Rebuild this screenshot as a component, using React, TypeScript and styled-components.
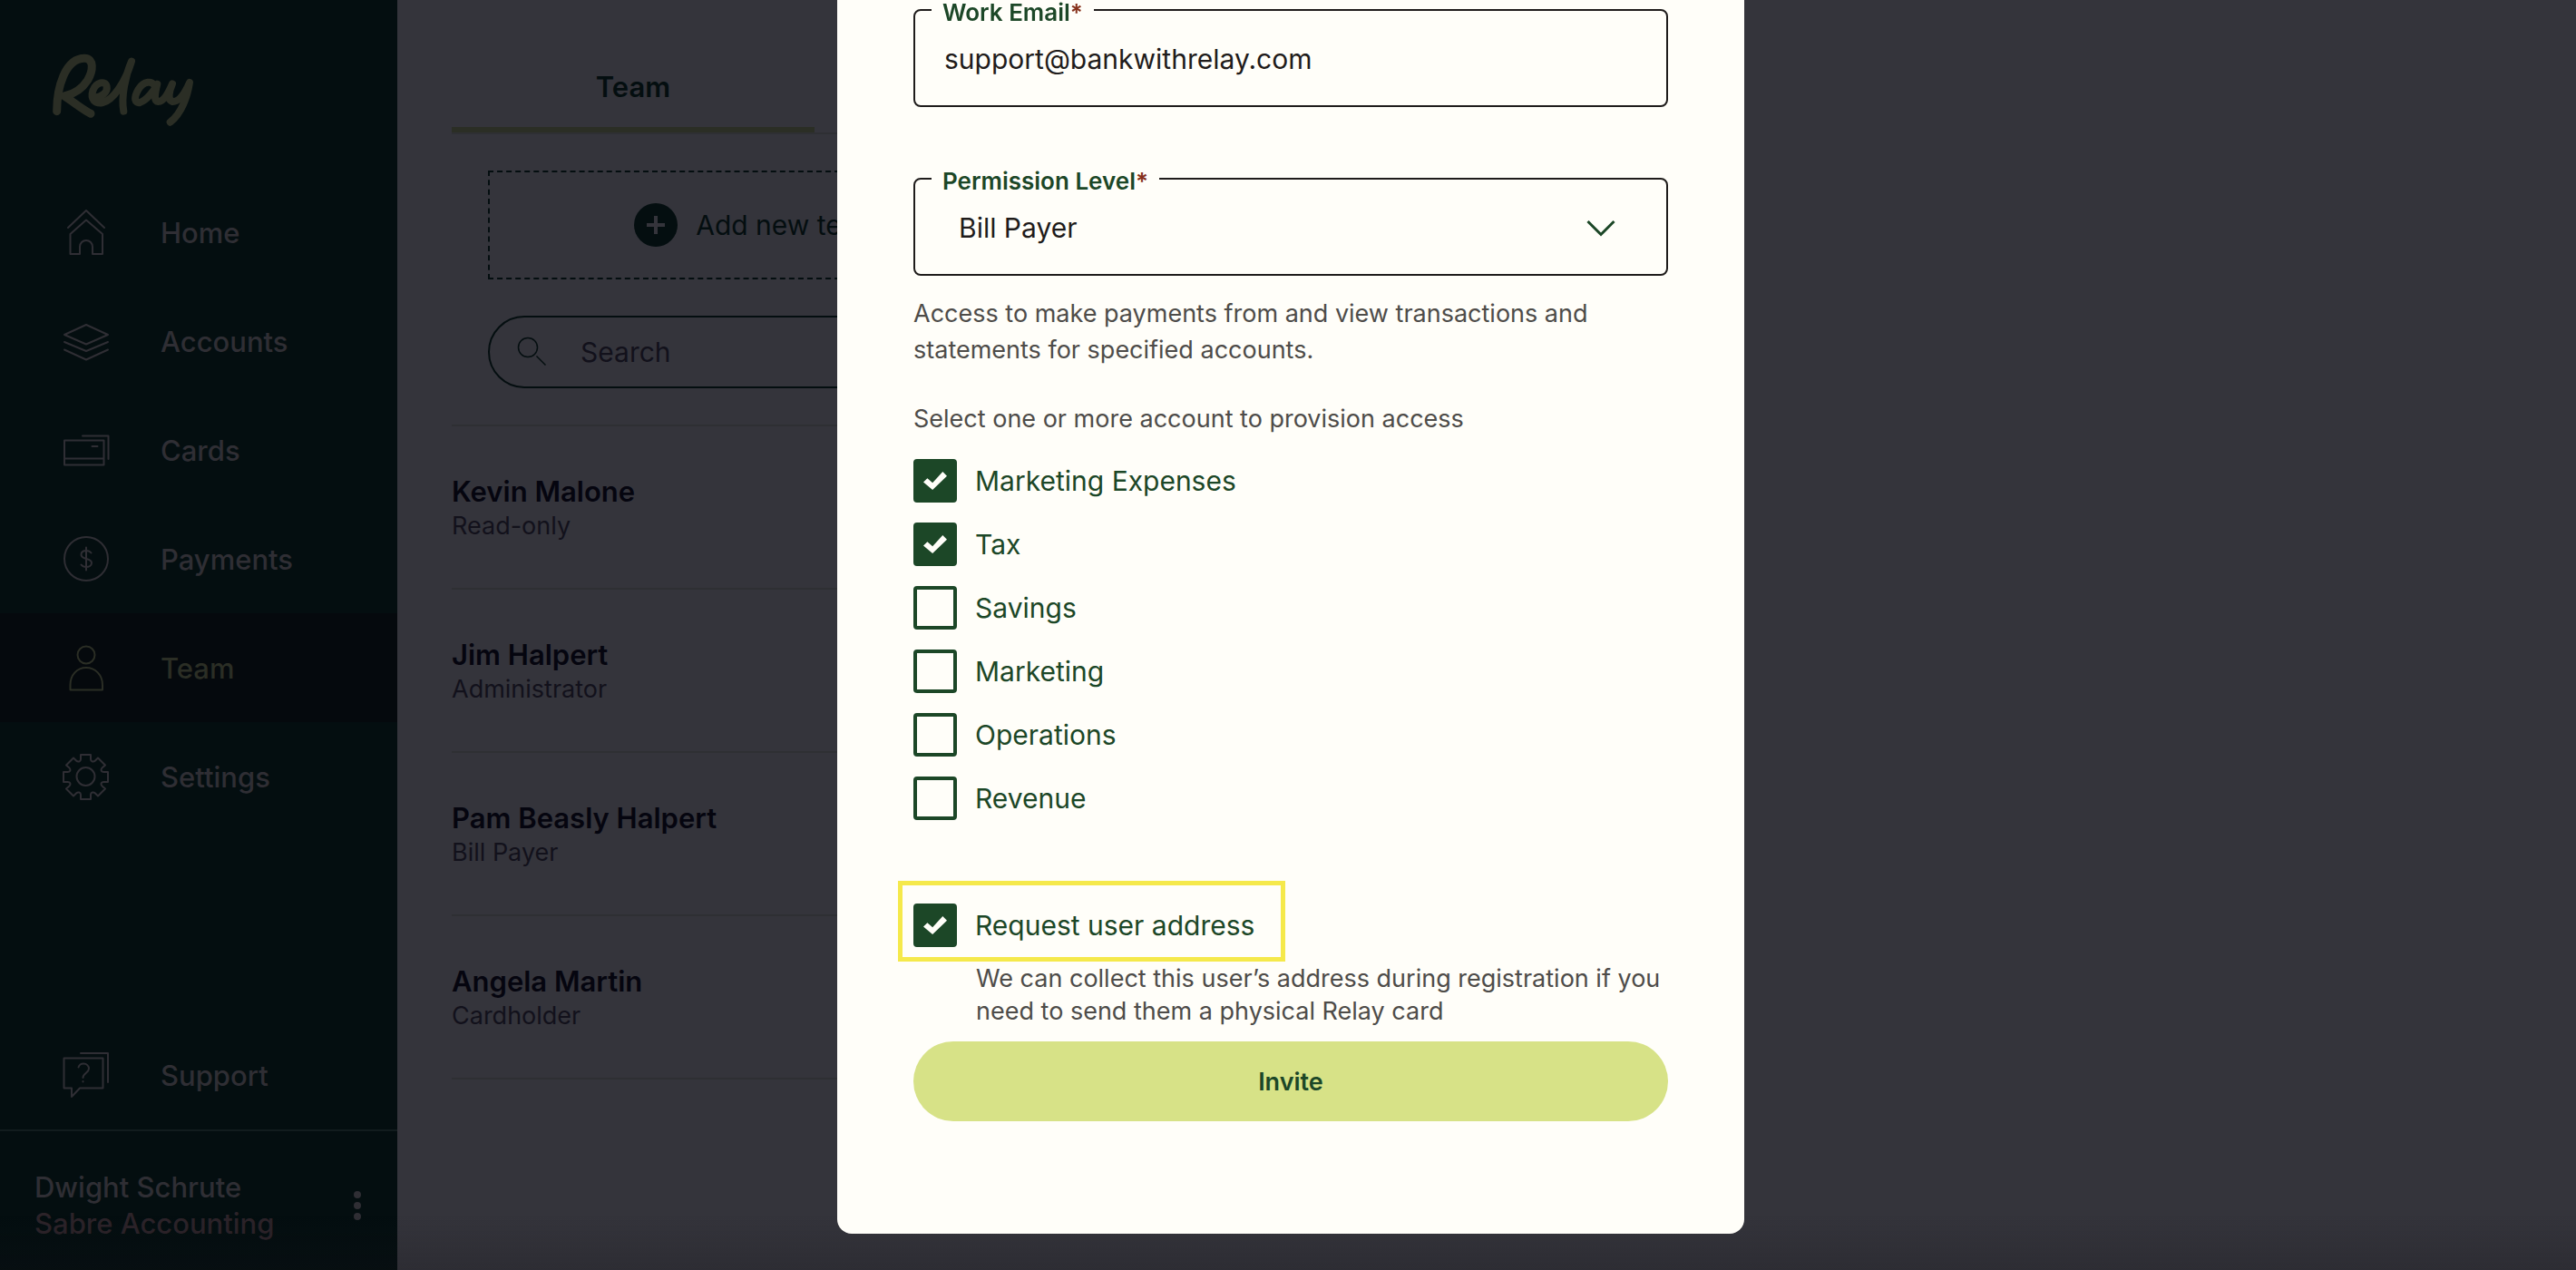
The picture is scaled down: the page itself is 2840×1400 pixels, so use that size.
import React, { useState } from "react";
import styled, { createGlobalStyle, css } from "styled-components";

const color = {
  page: "#34343b",
  sidebar: "#040e10",
  sidebarActive: "#05090d",
  sidebarLine: "#121c1e",
  sidebarText: "#2f2e34",
  sidebarMuted: "#2c2329",
  olive: "#2b2e25",
  ink: "#040e10",
  rowLine: "#2e2f33",
  name: "#05050f",
  muted: "#12111b",
  modal: "#fffef9",
  green: "#1c4727",
  lime: "#d7e287",
  text: "#1f1c1b",
  body: "#4e4c49",
  required: "#86301a",
  highlight: "#f5e94b",
};

const GlobalStyle = createGlobalStyle`
  *, *::before, *::after { box-sizing: border-box; }
  body {
    margin: 0;
    background: ${color.page};
    font-family: Inter, "Liberation Sans", sans-serif;
    font-size: 30px;
    line-height: 40px;
    overflow: hidden;
  }
  button, input, select { font: inherit; color: inherit; }
`;

const Page = styled.div`
  display: flex;
  height: 100vh;
`;

const Sidebar = styled.aside`
  display: flex;
  flex-direction: column;
  flex: 0 0 438px;
  background: ${color.sidebar};
  color: ${color.sidebarText};
  font-size: 31px;
  font-weight: 500;
`;

const LogoLink = styled.a`
  display: block;
  height: 196px;
  padding: 56px 54px 0;
`;

const NavList = styled.nav<{ $bottom?: boolean }>`
  display: flex;
  flex-direction: column;
  ${(p) => p.$bottom && css`margin-top: auto;`}
`;

const NavItem = styled.a<{ $active?: boolean }>`
  display: flex;
  align-items: center;
  gap: 56px;
  height: 120px;
  padding: 2px 0 0 69px;
  color: ${(p) => (p.$active ? color.olive : "inherit")};
  background: ${(p) => (p.$active ? color.sidebarActive : "transparent")};
  text-decoration: none;
`;

const LineIcon = styled.svg`
  flex: none;
  width: 52px;
  height: 52px;
  fill: none;
  stroke: currentColor;
  stroke-width: 2;
  stroke-linejoin: round;
  stroke-linecap: round;
`;

const Account = styled.div`
  display: flex;
  align-items: center;
  justify-content: space-between;
  height: 155px;
  padding: 10px 28px 0 38px;
  border-top: 2px solid ${color.sidebarLine};
`;

const AccountName = styled.div``;
const Company = styled.div`
  color: ${color.sidebarMuted};
`;

const MenuButton = styled.button`
  display: grid;
  place-items: center;
  width: 32px;
  height: 48px;
  padding: 0;
  border: 0;
  background: none;
`;

const Main = styled.main`
  flex: 1;
  min-width: 0;
  padding: 0 60px;
`;

const Column = styled.div`
  max-width: 800px;
`;

const Tabs = styled.div`
  display: flex;
  height: 148px;
  padding-top: 52px;
  border-bottom: 2px solid ${color.rowLine};
`;

const Tab = styled.button`
  flex: 0 0 50%;
  padding: 0;
  border: 0;
  border-bottom: 6px solid ${color.olive};
  background: none;
  color: ${color.ink};
  font-size: 31px;
  font-weight: 600;
`;

const Tools = styled.div`
  display: flex;
  flex-direction: column;
  gap: 40px;
  padding: 40px;
`;

const AddButton = styled.button`
  display: flex;
  align-items: center;
  justify-content: center;
  gap: 20px;
  height: 120px;
  border: 2px dashed ${color.ink};
  background: none;
  color: ${color.ink};
`;

const SearchBox = styled.label`
  display: flex;
  align-items: center;
  gap: 36px;
  height: 80px;
  padding: 0 30px;
  border: 2px solid ${color.ink};
  border-radius: 40px;
  color: ${color.ink};
`;

const SearchInput = styled.input`
  flex: 1;
  min-width: 0;
  padding: 0;
  border: 0;
  outline: 0;
  background: none;
  color: ${color.muted};
  &::placeholder { color: ${color.muted}; opacity: 1; }
`;

const People = styled.ul`
  margin: 0;
  padding: 0;
  list-style: none;
  border-top: 2px solid ${color.rowLine};
`;

const Person = styled.li`
  height: 180px;
  padding-top: 52px;
  border-bottom: 2px solid ${color.rowLine};
`;

const PersonName = styled.div`
  color: ${color.name};
  font-size: 31px;
  font-weight: 600;
`;

const PersonRole = styled.div`
  color: ${color.muted};
  font-size: 27px;
  line-height: 36px;
`;

const Overlay = styled.div`
  position: fixed;
  inset: 0;
  display: flex;
  align-items: flex-start;
  justify-content: center;
  padding-left: 6px;
  background: linear-gradient(to top, rgba(20, 18, 24, 0.2), transparent 60px);
`;

const Dialog = styled.form`
  width: 1000px;
  padding: 0 84px 124px;
  border-radius: 0 0 16px 16px;
  background: ${color.modal};
  color: ${color.text};
`;

const Field = styled.fieldset`
  position: relative;
  min-width: 0;
  height: 118px;
  margin: 0;
  padding: 0;
  border: 2px solid ${color.text};
  border-radius: 8px;
  & + & { margin-top: 68px; }
`;

const Legend = styled.legend`
  margin-left: 18px;
  padding: 5px 12px 0;
  color: ${color.green};
  font-size: 26px;
  font-weight: 600;
  line-height: 17px;
`;

const Required = styled.span`
  color: ${color.required};
`;

const TextInput = styled.input`
  display: block;
  width: 100%;
  height: 94px;
  padding: 0 32px 8px;
  border: 0;
  outline: 0;
  background: none;
`;

const Select = styled.select`
  display: block;
  width: 100%;
  height: 94px;
  padding: 0 48px 8px;
  border: 0;
  outline: 0;
  appearance: none;
  background: none;
`;

const Chevron = styled.svg`
  position: absolute;
  top: 34px;
  right: 56px;
  pointer-events: none;
  fill: none;
  stroke: ${color.green};
  stroke-width: 3;
`;

const Description = styled.p`
  margin: 22px 0 0;
  color: ${color.body};
  font-size: 27px;
`;

const Accounts = styled.fieldset`
  min-width: 0;
  margin: 36px 0 0;
  padding: 0;
  border: 0;
`;

const AccountsTitle = styled.legend`
  margin-bottom: 24px;
  padding: 0;
  color: ${color.body};
  font-size: 27px;
`;

const Checks = styled.div`
  display: flex;
  flex-direction: column;
  gap: 22px;
`;

const CheckRow = styled.label`
  display: flex;
  align-items: center;
  gap: 20px;
  color: ${color.green};
`;

const tick =
  "polygon(0 58%, 17% 36%, 39% 61%, 82% 0, 100% 24%, 39% 100%)";

const CheckInput = styled.input`
  display: grid;
  place-items: center;
  flex: none;
  appearance: none;
  width: 48px;
  height: 48px;
  margin: 0;
  border: 4px solid ${color.green};
  border-radius: 4px;
  &:checked { background: ${color.green}; }
  &:checked::before {
    content: "";
    width: 26px;
    height: 20px;
    background: ${color.modal};
    clip-path: ${tick};
  }
`;

const RequestBlock = styled.div`
  position: relative;
  margin: 92px 0 15px;
`;

const Highlight = styled.div`
  position: absolute;
  top: -25px;
  left: -17px;
  width: 427px;
  height: 89px;
  border: 5px solid ${color.highlight};
  pointer-events: none;
`;

const Hint = styled.p`
  margin: 17px 0 0 69px;
  color: ${color.body};
  font-size: 27px;
  line-height: 36px;
`;

const InviteButton = styled.button`
  display: block;
  width: 100%;
  height: 88px;
  padding: 2px 0 0;
  border: 0;
  border-radius: 44px;
  background: ${color.lime};
  color: ${color.green};
  font-size: 27px;
  font-weight: 600;
`;

const Logo = () => (
  <svg
    width="164"
    height="86"
    viewBox="162 168 492 258"
    role="img"
    aria-label="Relay"
    fill="none"
    stroke={color.olive}
    strokeWidth="27"
    strokeLinecap="round"
    strokeLinejoin="round"
  >
    <path d="M188 368C188 290 215 193 280 193C312 193 308 235 290 265C270 296 240 312 213 318C240 335 270 360 300 376" />
    <path
      strokeWidth="24"
      d="M308 322C335 324 357 305 353 286C349 266 318 270 307 300C298 330 315 343 338 340C375 332 415 270 435 203C415 250 400 320 409 368"
    />
    <path
      strokeWidth="24"
      d="M512 285C505 265 475 268 458 295C440 325 447 343 463 339C485 332 510 300 520 278C512 310 508 335 523 336C545 336 560 300 570 277C560 300 553 330 570 336C595 338 615 300 627 273C620 320 600 375 563 404"
    />
  </svg>
);

const icons = {
  home: (
    <>
      <path d="M6 20L26 1L46 20" />
      <path d="M8.500 27L26 11.500L44 27V49H33V41A7 7 0 0 0 19 41V49H8.500Z" />
    </>
  ),
  accounts: (
    <path d="M26 7L50 18L26 28.500L2 18ZM2 26L26 36L50 26M2 34.500L26 45.500L50 34.500" />
  ),
  cards: (
    <path d="M2 14.500H45.500V41.500H2ZM2 34.500H45.500M32.500 21H38.500M22 9.500H50.500V35" />
  ),
  payments: (
    <>
      <circle cx="26" cy="25" r="24" />
      <path d="M31.500 18.500C30 16.500 28 16 26 16C23 16 20.500 17.500 20.500 20.500C20.500 26.500 32 23.500 32 29.500C32 32.500 29 34 26 34C24 34 22 33.500 20.500 31.500M26 12.500V37.500" />
    </>
  ),
  team: (
    <>
      <circle cx="26" cy="11" r="9.500" />
      <path d="M8.500 49.500V44C8.500 33 16 25 26 25S44 33 44 44V49.500Z" />
    </>
  ),
  settings: (
    <>
      <circle cx="25.500" cy="25" r="10" />
      <path d="M20 1H31V6C31 8.500 34 9.500 36 7.500L39 4.500L47 12.500L43.500 15.500C41.500 18 42.500 20 45.500 20H50V31H45.500C42.500 31 41.500 33 43.500 35.500L47 38.500L39 46.500L36 43.500C34 41.500 31 42.500 31 45V50H20V45C20 42.500 17 41.500 15 43.500L12 46.500L4 38.500L7.500 35.500C9.500 33 8.500 31 5.500 31H1V20H5.500C8.500 20 9.500 18 7.500 15.500L4 12.500L12 4.500L15 7.500C17 9.500 20 8.500 20 6Z" />
    </>
  ),
  support: (
    <>
      <path d="M1.500 6.500H44.500V39.500H19L10 49V39.500H1.500ZM20 1H50V33" />
      <path d="M17.500 16.500C18.500 13.500 20.500 12.500 23 12.500C26.500 12.500 29 15 29 18C29 22.500 22.500 23 22.500 28" />
      <path d="M22.500 32V32.500" />
    </>
  ),
};

const navItems: { id: keyof typeof icons; label: string }[] = [
  { id: "home", label: "Home" },
  { id: "accounts", label: "Accounts" },
  { id: "cards", label: "Cards" },
  { id: "payments", label: "Payments" },
  { id: "team", label: "Team" },
  { id: "settings", label: "Settings" },
];

const people = [
  { name: "Kevin Malone", role: "Read-only" },
  { name: "Jim Halpert", role: "Administrator" },
  { name: "Pam Beasly Halpert", role: "Bill Payer" },
  { name: "Angela Martin", role: "Cardholder" },
];

const accountNames = [
  "Marketing Expenses",
  "Tax",
  "Savings",
  "Marketing",
  "Operations",
  "Revenue",
];

const NavLink = ({
  id,
  label,
  active,
}: {
  id: keyof typeof icons;
  label: string;
  active?: boolean;
}) => (
  <NavItem href={`#${id}`} $active={active} aria-current={active ? "page" : undefined}>
    <LineIcon viewBox="0 0 52 52" aria-hidden="true">
      {icons[id]}
    </LineIcon>
    {label}
  </NavItem>
);

const CheckOption = ({
  label,
  initial = false,
}: {
  label: string;
  initial?: boolean;
}) => {
  const [checked, setChecked] = useState(initial);
  return (
    <CheckRow>
      <CheckInput
        type="checkbox"
        checked={checked}
        onChange={(e) => setChecked(e.target.checked)}
      />
      {label}
    </CheckRow>
  );
};

const InviteDialog = () => (
  <Overlay>
    <Dialog onSubmit={(e) => e.preventDefault()}>
      <Field>
        <Legend>
          <label htmlFor="email">
            Work Email<Required>*</Required>
          </label>
        </Legend>
        <TextInput id="email" type="email" defaultValue="support@bankwithrelay.com" />
      </Field>
      <Field>
        <Legend>
          <label htmlFor="permission">
            Permission Level<Required>*</Required>
          </label>
        </Legend>
        <Select id="permission" defaultValue="Bill Payer">
          <option>Bill Payer</option>
        </Select>
        <Chevron width="32" height="20" viewBox="0 0 32 20" aria-hidden="true">
          <path d="M1.500 2L16 16.500L30.500 2" />
        </Chevron>
      </Field>
      <Description>
        Access to make payments from and view transactions and statements for
        specified accounts.
      </Description>
      <Accounts>
        <AccountsTitle>Select one or more account to provision access</AccountsTitle>
        <Checks>
          {accountNames.map((name, i) => (
            <CheckOption key={name} label={name} initial={i < 2} />
          ))}
        </Checks>
      </Accounts>
      <RequestBlock>
        <CheckOption label="Request user address" initial />
        <Highlight />
        <Hint>
          We can collect this user’s address during registration if you need to
          send them a physical Relay card
        </Hint>
      </RequestBlock>
      <InviteButton type="submit">Invite</InviteButton>
    </Dialog>
  </Overlay>
);

export default function App() {
  return (
    <>
      <GlobalStyle />
      <Page>
        <Sidebar>
          <LogoLink href="#home">
            <Logo />
          </LogoLink>
          <NavList>
            {navItems.map((item) => (
              <NavLink key={item.id} {...item} active={item.id === "team"} />
            ))}
          </NavList>
          <NavList $bottom>
            <NavLink id="support" label="Support" />
          </NavList>
          <Account>
            <div>
              <AccountName>Dwight Schrute</AccountName>
              <Company>Sabre Accounting</Company>
            </div>
            <MenuButton type="button" aria-label="Account menu">
              <svg width="8" height="32" viewBox="0 0 8 32" fill="currentColor">
                <circle cx="4" cy="4" r="4" />
                <circle cx="4" cy="16" r="4" />
                <circle cx="4" cy="28" r="4" />
              </svg>
            </MenuButton>
          </Account>
        </Sidebar>
        <Main>
          <Column>
            <Tabs>
              <Tab type="button">Team</Tab>
            </Tabs>
            <Tools>
              <AddButton type="button">
                <svg width="48" height="48" viewBox="0 0 48 48" aria-hidden="true">
                  <circle cx="24" cy="24" r="24" fill="currentColor" />
                  <path d="M24 14V34M14 24H34" stroke={color.page} strokeWidth="4" />
                </svg>
                Add new team member
              </AddButton>
              <SearchBox>
                <svg
                  width="34"
                  height="34"
                  viewBox="0 0 34 34"
                  fill="none"
                  stroke="currentColor"
                  strokeWidth="1.500"
                  aria-hidden="true"
                >
                  <circle cx="12" cy="12" r="10.500" />
                  <path d="M21.500 21.500L31.500 31.500" />
                </svg>
                <SearchInput type="search" placeholder="Search" aria-label="Search" />
              </SearchBox>
            </Tools>
            <People>
              {people.map((p) => (
                <Person key={p.name}>
                  <PersonName>{p.name}</PersonName>
                  <PersonRole>{p.role}</PersonRole>
                </Person>
              ))}
            </People>
          </Column>
        </Main>
      </Page>
      <InviteDialog />
    </>
  );
}
